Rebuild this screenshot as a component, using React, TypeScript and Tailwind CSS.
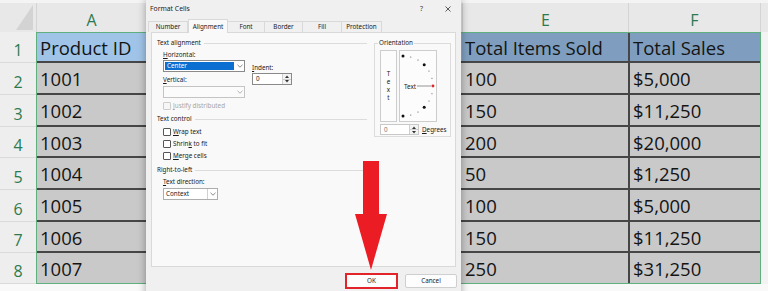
import React from "react";

const rows = [
  ["Product ID", "Total Items Sold", "Total Sales"],
  ["1001", "100", "$5,000"],
  ["1002", "150", "$11,250"],
  ["1003", "200", "$20,000"],
  ["1004", "50", "$1,250"],
  ["1005", "100", "$5,000"],
  ["1006", "150", "$11,250"],
  ["1007", "250", "$31,250"],
];

const rowH = ["h-[30px]", "h-[32px]", "h-[32px]", "h-[31px]", "h-[32px]", "h-[32px]", "h-[31px]", "h-[30px]"];
const numH = ["h-[31px]", "h-[32px]", "h-[32px]", "h-[31px]", "h-[32px]", "h-[32px]", "h-[31px]", "h-[31px]"];

function Chevron({ color = "#6b6b6b" }: { color?: string }) {
  return (
    <svg width="6" height="4" viewBox="0 0 6 4">
      <path d="M0.5 0.8 L3 3.2 L5.5 0.8" fill="none" stroke={color} strokeWidth="0.8" />
    </svg>
  );
}

function Spin() {
  return (
    <div className="flex flex-col w-[9px] h-full border-l border-[#cfcfcf]">
      <div className="flex-1 flex items-center justify-center border-b border-[#cfcfcf] bg-[#f3f3f3]">
        <svg width="4" height="3" viewBox="0 0 4 3">
          <path d="M0 3 L2 0.5 L4 3 Z" fill="#333" />
        </svg>
      </div>
      <div className="flex-1 flex items-center justify-center bg-[#f3f3f3]">
        <svg width="4" height="3" viewBox="0 0 4 3">
          <path d="M0 0 L2 2.5 L4 0 Z" fill="#333" />
        </svg>
      </div>
    </div>
  );
}

function Check({ label, u, rest, disabled = false }: { label?: string; u: string; rest: string; disabled?: boolean }) {
  return (
    <div className="flex items-center h-[8px]">
      <div
        className={
          disabled
            ? "w-[8px] h-[8px] border border-[#cdcdcd] bg-[#f6f6f6] rounded-[1px]"
            : "w-[8px] h-[8px] border border-[#555] bg-white rounded-[1px]"
        }
      />
      <span className={disabled ? "ml-[2px] text-[#a6a6a6]" : "ml-[2px]"}>
        {label}
        <span className="underline">{u}</span>
        {rest}
      </span>
    </div>
  );
}

function GroupHead({ text }: { text: string }) {
  return (
    <div className="flex items-center h-[8px] pl-[5px]">
      <span>{text}</span>
      <div className="flex-1 h-px bg-[#dcdcdc] ml-[3px]" />
    </div>
  );
}

function Dial() {
  const cx = 3;
  const cy = 35;
  const r = 30;
  const angles = [90, 75, 60, 45, 30, 15, -15, -30, -45, -60, -75, -90];
  return (
    <svg width="36" height="70" viewBox="0 0 36 70">
      {angles.map((a) => {
        const big = a % 45 === 0;
        const x = cx + r * Math.cos((a * Math.PI) / 180);
        const y = cy - r * Math.sin((a * Math.PI) / 180);
        return <circle key={a} cx={x} cy={y} r={big ? 1.5 : 0.55} fill={big ? "#111" : "#444"} />;
      })}
      <circle cx={33} cy={35} r={1.4} fill="#e0262b" />
      <line x1="17" y1="35" x2="31.5" y2="35" stroke="#8a8a8a" strokeWidth="0.9" />
      <text x="4" y="37.5" fontSize="6.3" fontFamily="Noto Sans, sans-serif" fill="#222">
        Text
      </text>
    </svg>
  );
}

export default function App() {
  return (
    <div className="relative w-[768px] h-[291px] overflow-hidden bg-[#f9f9f9] font-['Open_Sans',sans-serif]">
      {/* Spreadsheet */}
      <div className="h-[3px] bg-[#f4f4f4]" />
      <div className="flex h-[29px] bg-[#e8e8e8] text-[#2d7a4e] text-[16px]">
        <div className="w-[36px] h-full flex items-end justify-end pr-[2px] pb-[2px]">
          <svg width="18" height="25" viewBox="0 0 18 25">
            <path d="M17 0 L17 25 L0 25 Z" fill="#d3d3d3" />
          </svg>
        </div>
        <div className="w-[110px] h-full flex items-center justify-center pt-[4px] border-l border-[#d4d4d4]">A</div>
        <div className="w-[316px] h-full border-l border-[#d4d4d4]" />
        <div className="w-[166px] h-full flex items-center justify-center pt-[4px] border-l border-[#d4d4d4]">E</div>
        <div className="w-[132px] h-full flex items-center justify-center pt-[4px] border-l border-[#d4d4d4]">F</div>
        <div className="flex-1 h-full border-l border-[#d4d4d4]" />
      </div>
      <div className="flex">
        <div className="w-[36px] flex flex-col bg-[#eeeeee] text-[#2d7a4e] text-[16px]">
          {numH.map((h, i) => (
            <div key={i} className={`${h} flex items-center justify-center pt-[6px] border-b border-[#dadada]`}>
              {i + 1}
            </div>
          ))}
        </div>
        <div className="w-[725px] border border-[#5fb07e] flex flex-col text-[18.5px] text-[#141414]">
          {rows.map((r, i) => (
            <div key={i} className={`${rowH[i]} flex ${i < 7 ? "border-b-2 border-[#464646]" : ""}`}>
              <div className={`w-[109px] flex items-center pl-[3px] pt-[2px] ${i === 0 ? "bg-[#a0c4e8]" : "bg-[#c9c9c9]"}`}>
                {r[0]}
              </div>
              <div className={`w-[316px] ${i === 0 ? "bg-[#8fb0d2]" : "bg-[#c9c9c9]"}`} />
              <div className={`w-[166px] flex items-center pl-[3px] pt-[2px] ${i === 0 ? "bg-[#7f9ebf]" : "bg-[#c9c9c9]"}`}>
                {r[1]}
              </div>
              <div
                className={`w-[132px] flex items-center pl-[3px] pt-[2px] border-l-2 border-[#464646] ${
                  i === 0 ? "bg-[#7f9ebf]" : "bg-[#c9c9c9]"
                }`}
              >
                {r[2]}
              </div>
            </div>
          ))}
        </div>
        <div className="flex-1 bg-[#f3f3f3]" />
      </div>

      {/* Dialog */}
      <div className="absolute left-[146px] top-0 w-[315px] h-[300px] bg-[#f0f0f0] flex flex-col text-[6.3px] leading-[8px] text-[#1a1a1a] font-['Noto_Sans',sans-serif] shadow-[0_0_8px_rgba(0,0,0,0.35)]">
        <div className="h-[18px] flex items-center pl-[4px] pr-[10px]">
          <span className="text-[6.8px]">Format Cells</span>
          <span className="ml-auto text-[7px] text-[#444]">?</span>
          <svg className="ml-[22px]" width="6" height="6" viewBox="0 0 6 6">
            <path d="M0.5 0.5 L5.5 5.5 M5.5 0.5 L0.5 5.5" stroke="#333" strokeWidth="0.8" />
          </svg>
        </div>
        <div className="flex items-end h-[14px] ml-[2px]">
          <div className="w-[40px] h-[11px] flex items-center justify-center border border-b-0 border-[#d9d9d9]">Number</div>
          <div className="relative z-10 -mb-px w-[40px] h-[14px] flex items-center justify-center border border-b-0 border-[#d9d9d9] bg-[#f9f9f9]">
            Alignment
          </div>
          <div className="w-[37px] h-[11px] flex items-center justify-center border border-l-0 border-b-0 border-[#d9d9d9]">Font</div>
          <div className="w-[38px] h-[11px] flex items-center justify-center border border-l-0 border-b-0 border-[#d9d9d9]">Border</div>
          <div className="w-[39px] h-[11px] flex items-center justify-center border border-l-0 border-b-0 border-[#d9d9d9]">Fill</div>
          <div className="w-[40px] h-[11px] flex items-center justify-center border border-l-0 border-b-0 border-[#d9d9d9]">Protection</div>
        </div>
        <div className="mx-[5px] h-[235px] border border-[#d9d9d9] bg-[#f9f9f9] flex">
          {/* left column */}
          <div className="w-[215px] flex flex-col pt-[6px]">
            <GroupHead text="Text alignment" />
            <div className="flex pl-[11px] mt-[4px]">
              <div className="w-[82px] flex flex-col">
                <div className="h-[8px]">
                  <span className="underline">H</span>orizontal:
                </div>
                <div className="mt-[1px] h-[12px] flex border border-[#8a8a8a] bg-white">
                  <div className="flex-1 m-[1px] bg-[#0a6fd1] text-white flex items-center pl-[2px]">Center</div>
                  <div className="w-[9px] flex items-center justify-center">
                    <Chevron />
                  </div>
                </div>
                <div className="mt-[4px] h-[8px]">
                  <span className="underline">V</span>ertical:
                </div>
                <div className="mt-[2px] h-[12px] flex border border-[#c4c4c4] bg-[#fbfbfb]">
                  <div className="flex-1" />
                  <div className="w-[9px] flex items-center justify-center">
                    <Chevron color="#a0a0a0" />
                  </div>
                </div>
              </div>
              <div className="ml-[7px] w-[40px] flex flex-col">
                <div className="mt-[13px] h-[8px]">
                  <span className="underline">I</span>ndent:
                </div>
                <div className="mt-[1px] h-[12px] flex border border-[#8a8a8a] bg-white">
                  <div className="flex-1 flex items-center pl-[3px]">0</div>
                  <Spin />
                </div>
              </div>
            </div>
            <div className="pl-[11px] mt-[4px]">
              <Check u="J" rest="ustify distributed" disabled />
            </div>
            <div className="mt-[5px]">
              <GroupHead text="Text control" />
            </div>
            <div className="pl-[11px] flex flex-col gap-[4px] mt-[5px]">
              <Check u="W" rest="rap text" />
              <Check label="Shrin" u="k" rest=" to fit" />
              <Check u="M" rest="erge cells" />
            </div>
            <div className="mt-[6px]">
              <GroupHead text="Right-to-left" />
            </div>
            <div className="pl-[11px] mt-[4px] h-[8px]">
              <span className="underline">T</span>ext direction:
            </div>
            <div className="ml-[11px] mt-[2px] w-[55px] h-[12px] flex border border-[#adadad] bg-white">
              <div className="flex-1 flex items-center pl-[2px]">Context</div>
              <div className="w-[10px] flex items-center justify-center border-l border-[#d0d0d0]">
                <Chevron />
              </div>
            </div>
          </div>
          {/* orientation */}
          <div className="ml-[7px] w-[77px] pt-[6px]">
            <fieldset className="border border-[#dcdcdc] pl-[5px] pb-[1px]">
              <legend className="-ml-[2px] px-[1px] leading-[8px]">Orientation</legend>
              <div className="mt-[3px] flex gap-[2px] h-[72px]">
                <div className="w-[17px] h-full border border-[#cdcdcd] bg-[#fcfcfc] flex flex-col items-center pt-[19px]">
                  <span className="h-[8px]">T</span>
                  <span className="h-[8px]">e</span>
                  <span className="h-[8px]">x</span>
                  <span className="h-[8px]">t</span>
                </div>
                <div className="w-[38px] h-full border border-[#cdcdcd] bg-[#fcfcfc]">
                  <Dial />
                </div>
              </div>
              <div className="mt-[2px] flex items-center h-[11px]">
                <div className="w-[39px] h-full flex border border-[#c8c8c8] bg-white">
                  <div className="flex-1 flex items-center pl-[3px] text-[#777]">0</div>
                  <Spin />
                </div>
                <span className="ml-[3px]">
                  <span className="underline">D</span>egrees
                </span>
              </div>
            </fieldset>
          </div>
        </div>
        <div className="flex justify-end items-start pt-[6px] pr-[4px] gap-[7px]">
          <div className="w-[53px] h-[16px] border-2 border-[#e3232a] bg-[#fdfdfd] flex items-center justify-center">OK</div>
          <div className="mt-[1px] w-[52px] h-[14px] border border-[#cfcfcf] bg-[#fdfdfd] rounded-[2px] flex items-center justify-center">
            Cancel
          </div>
        </div>
      </div>

      {/* Red arrow annotation */}
      <svg className="absolute left-[355px] top-[161px]" width="32" height="110" viewBox="0 0 32 110">
        <path d="M8 0 L24 0 L24 53 L32 53 L16 109 L0 53 L8 53 Z" fill="#ec1c24" />
      </svg>
    </div>
  );
}
